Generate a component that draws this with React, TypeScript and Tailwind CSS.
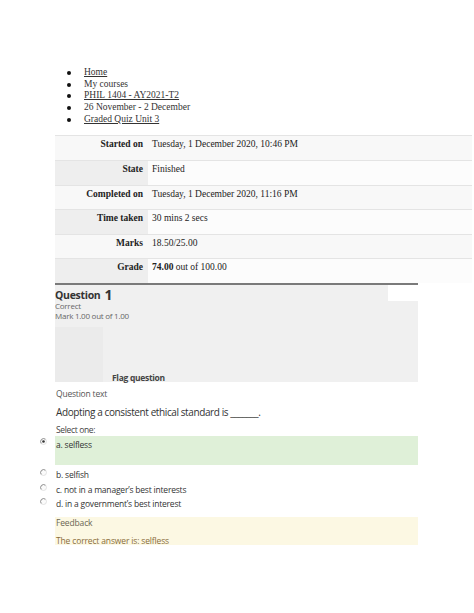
import React from "react";

function Radio({ checked }: { checked?: boolean }) {
  return (
    <svg width="7" height="7" viewBox="0 0 7 7" className="block">
      <circle cx="3.5" cy="3.5" r="3" fill="#fbfbfb" stroke="#dadada" strokeWidth="0.8" />
      <path d="M1.2 5.4 A3 3 0 0 1 5.4 1.2" fill="none" stroke="#8a8a8a" strokeWidth="0.9" />
      {checked && <circle cx="3.5" cy="3.5" r="1.3" fill="#333" />}
    </svg>
  );
}

const rows: { label: string; value: React.ReactNode; shaded: boolean }[] = [
  { label: "Started on", value: "Tuesday, 1 December 2020, 10:46 PM", shaded: true },
  { label: "State", value: "Finished", shaded: false },
  { label: "Completed on", value: "Tuesday, 1 December 2020, 11:16 PM", shaded: true },
  { label: "Time taken", value: "30 mins 2 secs", shaded: false },
  { label: "Marks", value: "18.50/25.00", shaded: true },
  {
    label: "Grade",
    value: (
      <>
        <b>74.00</b> out of 100.00
      </>
    ),
    shaded: false,
  },
];

const crumbs: { text: string; link: boolean }[] = [
  { text: "Home", link: true },
  { text: "My courses", link: false },
  { text: "PHIL 1404 - AY2021-T2", link: true },
  { text: "26 November - 2 December", link: false },
  { text: "Graded Quiz Unit 3", link: true },
];

export default function App() {
  return (
    <div className="w-[474px] h-[613px] bg-white overflow-hidden text-[#222]">
      <div className="font-['Liberation_Serif',serif]">
        <ul className="pt-[67px] flex flex-col">
          {crumbs.map((c) => (
            <li key={c.text} className="flex items-center h-[11.7px] text-[9.5px] leading-[11.7px] text-[#333]">
              <span className="ml-[67px] w-[4px] h-[4px] rounded-full bg-[#111]" />
              <span className={c.link ? "ml-[13px] underline decoration-[0.6px] underline-offset-[1px]" : "ml-[13px]"}>
                {c.text}
              </span>
            </li>
          ))}
        </ul>
        <div className="ml-[55px] mt-[10px] w-[417px]">
          {rows.map((r) => (
            <div
              key={r.label}
              className={`flex h-[24.6px] border-t border-[#e4e4e4] text-[9.5px] leading-[12px] ${r.shaded ? "bg-[#f8f8f8]" : "bg-[#fcfcfc]"}`}
            >
              <div
                className={`w-[93px] shrink-0 text-right pr-[5px] pt-[2px] font-bold ${r.shaded ? "" : "bg-[#eeeeee]"}`}
              >
                {r.label}
              </div>
              <div className="pl-[4px] pt-[2px]">{r.value}</div>
            </div>
          ))}
        </div>
      </div>

      <div className="font-['Open_Sans',sans-serif] text-[#333]">
        <div className="ml-[55px] w-[363px] h-[2px] bg-[#7a7a7a]" />
        <div className="ml-[55px] w-[363px]">
          <div className="flex h-[16px]">
            <div className="w-[333px] bg-[#f0f0f0] flex items-end leading-[12px]">
              <span className="text-[10.5px] tracking-[-0.3px] font-bold text-[#333] leading-[12px]">Question</span>
              <span className="text-[14px] font-bold text-[#333] ml-[4px] leading-[12px]">1</span>
            </div>
            <div className="flex-1 bg-white" />
          </div>
          <div className="bg-[#f0f0f0] h-[81px] flex flex-col">
            <div className="text-[8px] tracking-[-0.25px] leading-[10px] text-[#666]">Correct</div>
            <div className="text-[8px] tracking-[-0.25px] leading-[10px] text-[#666]">Mark 1.00 out of 1.00</div>
            <div className="mt-[6px] flex flex-1">
              <div className="w-[48px] bg-[#ebebeb]" />
              <div className="flex-1 flex items-end">
                <span className="ml-[9px] mb-[-1px] text-[8.5px] tracking-[-0.3px] leading-[11px] font-bold text-[#444]">
                  Flag question
                </span>
              </div>
            </div>
          </div>
        </div>

        <div className="ml-[56px] mt-[6px] text-[8.5px] tracking-[-0.2px] leading-[12px] text-[#555]">Question text</div>
        <div className="ml-[56px] mt-[5px] text-[10px] tracking-[-0.4px] leading-[14px] text-[#333]">
          Adopting a consistent ethical standard is _______.
        </div>
        <div className="ml-[56px] mt-[5px] text-[8.5px] tracking-[-0.35px] leading-[12px] text-[#444]">Select one:</div>

        <div className="flex ml-[40px]">
          <div className="w-[15px] pt-[2px]">
            <Radio checked />
          </div>
          <div className="w-[363px] h-[29px] bg-[#dff0d8] pl-[1px] pt-[3px] text-[8.5px] tracking-[-0.2px] leading-[12px] text-[#333]">
            a. selfless
          </div>
        </div>

        <div className="mt-[4px] flex flex-col">
          {[
            "b. selfish",
            "c. not in a manager\u2019s best interests",
            "d. in a government\u2019s best interest",
          ].map((t) => (
            <div key={t} className="flex ml-[40px] h-[14.5px]">
              <div className="w-[15px]">
                <Radio />
              </div>
              <div className="pl-[1px] text-[8.5px] tracking-[-0.2px] leading-[12px] text-[#333]">{t}</div>
            </div>
          ))}
        </div>

        <div className="ml-[55px] mt-[4px] w-[363px] h-[28px] bg-[#fcf8e3] pl-[1px]">
          <div className="text-[8.5px] tracking-[-0.15px] leading-[12px] text-[#6b6755]">Feedback</div>
          <div className="mt-[6px] text-[8.5px] tracking-[-0.15px] leading-[12px] text-[#8a6d3b]">
            The correct answer is: selfless
          </div>
        </div>
      </div>
    </div>
  );
}
